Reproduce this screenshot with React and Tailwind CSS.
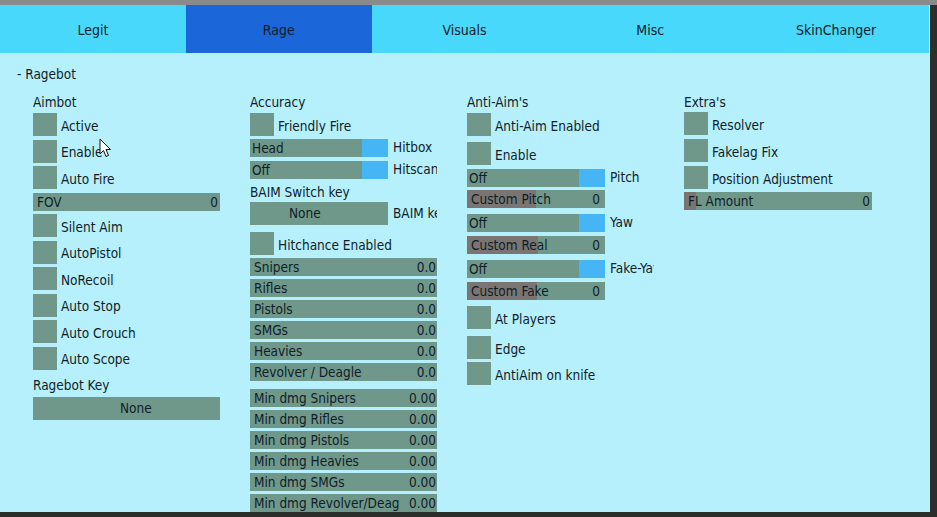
import React from "react";

const font = { fontFamily: '"DejaVu Sans Condensed", "Noto Sans", sans-serif' };

const TABS = ["Legit", "Rage", "Visuals", "Misc", "SkinChanger"];

// checkbox row
const Check = ({ label, className = "" }) => (
  <div className={`flex items-center h-[23px] ${className}`}>
    <div className="w-[24px] h-[23px] shrink-0 bg-[#6f988b]" />
    <span className="ml-[4px] whitespace-nowrap leading-[16px] translate-y-[0.5px]">{label}</span>
  </div>
);

// slider bar, fill = px of darker part
const Slider = ({ label, value, w = "w-[187px]", fill = 0, pr = "pr-[1px]", className = "" }) => (
  <div
    className={`flex items-center justify-between h-[18px] pl-[4px] ${pr} ${w} shrink-0 bg-[#6f988b] leading-[18px] whitespace-nowrap ${className}`}
    style={fill ? { background: `linear-gradient(to right, #7a7572 ${fill}px, #6f988b ${fill}px)` } : undefined}
  >
    <span>{label}</span>
    <span>{value}</span>
  </div>
);

// dropdown with blue arrow block
const Combo = ({ value, label, className = "" }) => (
  <div className={`flex items-center h-[18px] ${className}`}>
    <div className="w-[112px] h-[18px] shrink-0 bg-[#6f988b] pl-[2px] leading-[18px]">{value}</div>
    <div className="w-[26px] h-[18px] shrink-0 bg-[#45b5f5]" />
    <span className="ml-[5px] whitespace-nowrap leading-[16px] -translate-y-[1px]">{label}</span>
  </div>
);

const Heading = ({ children }) => <div className="h-[16px] leading-[16px] whitespace-nowrap">{children}</div>;

const Cursor = () => (
  <svg className="absolute left-[99px] top-[138px]" width="13" height="20" viewBox="0 0 13 20">
    <path d="M1 1 L1 16 L4.5 12.5 L7 18.5 L9.5 17.5 L7 11.5 L11.5 11.5 Z" fill="#fff" stroke="#111" strokeWidth="1" strokeLinejoin="round" />
  </svg>
);

export default function App() {
  return (
    <div className="relative w-[937px] h-[517px] overflow-hidden bg-[#2c2e2c] text-[13.5px] text-[#101d28]" style={font}>
      <div className="h-[5px] bg-[#8a8a8a]" />
      <div className="flex w-[937px]">
        <div className="w-[930px] flex flex-col border-r border-[#cfe9ee]">
          {/* tab bar */}
          <div className="flex h-[48px] bg-[#48d8fc]">
            {TABS.map((t) => (
              <div
                key={t}
                className={`w-[186px] flex items-center justify-center pt-[3px] text-[14px] ${t === "Rage" ? "bg-[#1b66d9]" : ""}`}
              >
                {t}
              </div>
            ))}
          </div>

          {/* content */}
          <div className="h-[459px] bg-[#b6f0fd] overflow-hidden">
            <div className="pt-[13px] pl-[17px] leading-[16px]">- Ragebot</div>
            <div className="flex gap-[30px] pl-[33px] mt-[12px]">
              {/* Aimbot */}
              <div className="w-[187px] flex flex-col overflow-hidden">
                <Heading>Aimbot</Heading>
                <div className="flex flex-col gap-[3.5px] mt-[3px]">
                  <Check label="Active" />
                  <Check label="Enable" />
                  <Check label="Auto Fire" />
                  <Slider label="FOV" value="0" pr="pr-[2px]" />
                  <Check label="Silent Aim" />
                  <Check label="AutoPistol" />
                  <Check label="NoRecoil" />
                  <Check label="Auto Stop" />
                  <Check label="Auto Crouch" />
                  <Check label="Auto Scope" />
                  <div className="mt-[4px] h-[16px] leading-[16px]">Ragebot Key</div>
                  <div className="h-[23px] bg-[#6f988b] pl-[87px] leading-[23px]">None</div>
                </div>
              </div>

              {/* Accuracy */}
              <div className="w-[187px] flex flex-col overflow-hidden">
                <Heading>Accuracy</Heading>
                <Check label="Friendly Fire" className="mt-[3px]" />
                <Combo value="Head" label="Hitbox" className="mt-[3px]" />
                <Combo value="Off" label="Hitscan" className="mt-[4px]" />
                <div className="mt-[5px] h-[16px] leading-[16px] whitespace-nowrap">BAIM Switch key</div>
                <div className="mt-[2px] flex items-center h-[23px]">
                  <div className="w-[138px] h-[23px] shrink-0 bg-[#6f988b] pl-[39px] leading-[23px]">None</div>
                  <span className="ml-[5px] whitespace-nowrap">BAIM key</span>
                </div>
                <Check label="Hitchance Enabled" className="mt-[7px]" />
                <div className="flex flex-col gap-[3px] mt-[3px]">
                  <Slider label="Snipers" value="0.0" />
                  <Slider label="Rifles" value="0.0" />
                  <Slider label="Pistols" value="0.0" />
                  <Slider label="SMGs" value="0.0" />
                  <Slider label="Heavies" value="0.0" />
                  <Slider label="Revolver / Deagle" value="0.0" />
                </div>
                <div className="flex flex-col gap-[3px] mt-[8px]">
                  <Slider label="Min dmg Snipers" value="0.00" />
                  <Slider label="Min dmg Rifles" value="0.00" />
                  <Slider label="Min dmg Pistols" value="0.00" />
                  <Slider label="Min dmg Heavies" value="0.00" />
                  <Slider label="Min dmg SMGs" value="0.00" />
                  <Slider label="Min dmg Revolver/Deag" value="0.00" />
                </div>
              </div>

              {/* Anti-Aim */}
              <div className="w-[187px] flex flex-col overflow-hidden">
                <Heading>Anti-Aim's</Heading>
                <Check label="Anti-Aim Enabled" className="mt-[3px]" />
                <Check label="Enable" className="mt-[6px]" />
                <Combo value="Off" label="Pitch" className="mt-[4px]" />
                <Slider label="Custom Pitch" value="0" w="w-[138px]" fill={69} pr="pr-[5px]" className="mt-[3px]" />
                <Combo value="Off" label="Yaw" className="mt-[6px]" />
                <Slider label="Custom Real" value="0" w="w-[138px]" fill={71} pr="pr-[5px]" className="mt-[4px]" />
                <Combo value="Off" label="Fake-Yaw" className="mt-[6px]" />
                <Slider label="Custom Fake" value="0" w="w-[138px]" fill={70} pr="pr-[5px]" className="mt-[4px]" />
                <Check label="At Players" className="mt-[6px]" />
                <Check label="Edge" className="mt-[7px]" />
                <Check label="AntiAim on knife" className="mt-[3px]" />
              </div>

              {/* Extra's */}
              <div className="w-[190px] flex flex-col overflow-hidden">
                <Heading>Extra's</Heading>
                <Check label="Resolver" className="mt-[2px]" />
                <Check label="Fakelag Fix" className="mt-[4px]" />
                <Check label="Position Adjustment" className="mt-[4px]" />
                <Slider label="FL Amount" value="0" w="w-[188px]" fill={12} pr="pr-[2px]" className="mt-[3px]" />
              </div>
            </div>
          </div>
        </div>
      </div>
      <Cursor />
    </div>
  );
}
